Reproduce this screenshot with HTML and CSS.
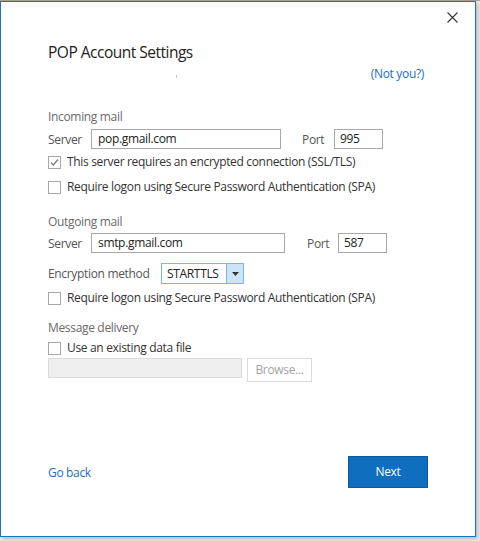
FILE: index.html
```html
<!DOCTYPE html>
<html>
<head>
<meta charset="utf-8">
<link rel="stylesheet" href="styles.css">
</head>
<body>
<div class="window">
  <div class="topbar">
    <svg class="close" width="11" height="11" viewBox="0 0 11 11"><path d="M0.5 0.5 L10.5 10.5 M10.5 0.5 L0.5 10.5" stroke="#333" stroke-width="1.1" fill="none"/></svg>
  </div>
  <div class="title">POP Account Settings</div>
  <div class="account"><span class="mark"></span><a class="link">(Not you?)</a></div>

  <div class="section">Incoming mail</div>
  <div class="row server-row">
    <span class="label server-label">Server</span>
    <div class="input in-server">pop.gmail.com</div>
    <span class="label port-label">Port</span>
    <div class="input in-port">995</div>
  </div>
  <div class="check first">
    <span class="box checked"><svg width="11" height="11" viewBox="0 0 11 11"><path d="M2 5.5 L4.3 8 L9 2.5" stroke="#7a7a7a" stroke-width="1.2" fill="none"/></svg></span>
    <span>This server requires an encrypted connection (SSL/TLS)</span>
  </div>
  <div class="check">
    <span class="box"></span>
    <span>Require logon using Secure Password Authentication (SPA)</span>
  </div>

  <div class="section out">Outgoing mail</div>
  <div class="row server-row2">
    <span class="label server-label">Server</span>
    <div class="input in-server2">smtp.gmail.com</div>
    <span class="label port-label2">Port</span>
    <div class="input in-port">587</div>
  </div>
  <div class="row enc-row">
    <span class="label enc-label">Encryption method</span>
    <div class="select"><span class="sel-text">STARTTLS</span><span class="sel-arrow"><svg width="7" height="4" viewBox="0 0 7 4"><path d="M0 0 H7 L3.5 4 Z" fill="#333"/></svg></span></div>
  </div>
  <div class="check spa2">
    <span class="box"></span>
    <span>Require logon using Secure Password Authentication (SPA)</span>
  </div>

  <div class="section delivery">Message delivery</div>
  <div class="check data">
    <span class="box"></span>
    <span>Use an existing data file</span>
  </div>
  <div class="row file-row">
    <div class="file-input"></div>
    <div class="browse">Browse...</div>
  </div>

  <div class="footer">
    <a class="link goback">Go back</a>
    <div class="next">Next</div>
  </div>
</div>
</body>
</html>
```

FILE: styles.css
```css
* { box-sizing: border-box; }
html, body { margin: 0; padding: 0; }
body {
  width: 480px;
  height: 541px;
  overflow: hidden;
  background: linear-gradient(#a3a3a3 0 1px, #ececec 1px);
  font-family: "Open Sans", "Noto Sans", sans-serif;
  font-size: 12px;
  letter-spacing: -0.33px;
  color: #333;
}
.window {
  margin-top: 1px;
  width: 476px;
  height: 536px;
  border: 1px solid #1a74c9;
  background: #fff;
  box-shadow: 2px 2px 4px rgba(0,0,0,0.22);
  padding: 0 50px 0 47px;
  display: flex;
  flex-direction: column;
}
.topbar {
  height: 40px;
  display: flex;
  justify-content: flex-end;
  margin-right: -33px;
  padding-top: 10px;
}
.close { display: block; }
.title {
  font-size: 15.5px;
  line-height: 20px;
  color: #222;
  letter-spacing: -0.5px;
}
.account {
  margin-top: 4px;
  margin-right: 1px;
  line-height: 16px;
  display: flex;
  justify-content: space-between;
  align-items: center;
}
.mark { width: 1px; height: 3px; background: #c8c8c8; margin-left: 128px; margin-top: 4px; }
.link { color: #1b6ec2; }
.section {
  margin-top: 27px;
  line-height: 16px;
  color: #6a6a6a;
}
.row { display: flex; align-items: center; }
.label { color: #555; }
.server-label { width: 43px; }
.input {
  height: 20px;
  border: 1px solid #a9a9a9;
  padding-left: 6px;
  line-height: 18px;
  color: #222;
}
.server-row { margin-top: 4px; }
.in-server { width: 190px; }
.port-label { margin-left: 21px; width: 32px; }
.in-port { width: 49px; padding-left: 5px; }
.check {
  display: flex;
  align-items: center;
  line-height: 16px;
  color: #333;
}
.check .box {
  width: 13px; height: 13px;
  border: 1px solid #a8a8a8;
  background: #fff;
  margin-right: 6px;
  display: flex;
  align-items: center;
  justify-content: center;
}
.check.first { margin-top: 5px; }
.check + .check { margin-top: 9px; }
.section.out { margin-top: 19px; }
.server-row2 { margin-top: 3px; }
.in-server2 { width: 194px; }
.port-label2 { margin-left: 22px; width: 31px; }
.enc-row { margin-top: 10px; }
.enc-label { width: 113px; }
.select {
  width: 83px; height: 21px;
  border: 1px solid #7eb4ea;
  display: flex;
}
.sel-text { flex: 1; padding-left: 5px; line-height: 19px; color: #222; }
.sel-arrow {
  width: 17px;
  background: #cce4f7;
  border-left: 1px solid #7eb4ea;
  display: flex; align-items: center; justify-content: center;
}
.sel-arrow svg { display: block; }
.check.spa2 { margin-top: 6px; }
.section.delivery { margin-top: 14px; }
.check.data { margin-top: 4px; }
.file-row { margin-top: 2px; align-items: flex-start; }
.file-input {
  width: 194px; height: 20px;
  background: #efefef;
  border: 1px solid #dcdcdc;
}
.browse {
  margin-left: 5px;
  width: 65px; height: 24px;
  border: 1px solid #dcdcdc;
  color: #a3a3a3;
  text-align: center;
  line-height: 22px;
}
.footer {
  margin-top: auto;
  margin-bottom: 48px;
  display: flex;
  justify-content: space-between;
  align-items: center;
  margin-right: -3px;
}
.next {
  width: 80px; height: 32px;
  background: #106ebe;
  border: 1px solid #0c5a9e;
  color: #fff;
  text-align: center;
  line-height: 30px;
}
```
